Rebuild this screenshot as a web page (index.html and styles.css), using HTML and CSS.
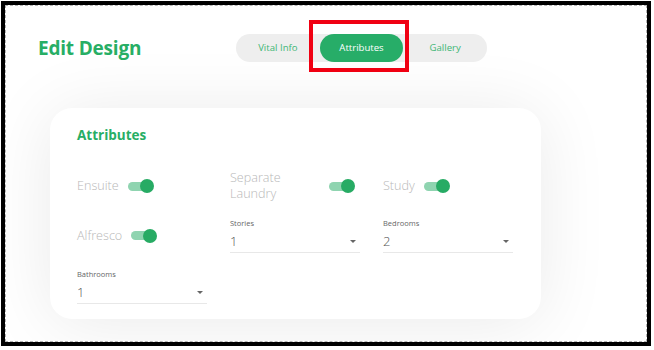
FILE: index.html
```html
<!DOCTYPE html>
<html>
<head>
<meta charset="utf-8">
<link rel="stylesheet" href="styles.css">
</head>
<body>
<div class="frame">
  <div class="screen">
    <div class="header">
      <h1 class="title">Edit Design</h1>
      <div class="tabs">
        <div class="tab">Vital Info</div>
        <div class="tab active">Attributes</div>
        <div class="tab">Gallery</div>
        <div class="highlight"></div>
      </div>
    </div>
    <div class="card">
      <h2 class="card-title">Attributes</h2>
      <div class="grid">
        <div class="switch-cell"><span class="switch-label">Ensuite</span><span class="switch"><span class="track"></span><span class="knob"></span></span></div>
        <div class="switch-cell"><span class="switch-label">Separate Laundry</span><span class="switch"><span class="track"></span><span class="knob"></span></span></div>
        <div class="switch-cell"><span class="switch-label">Study</span><span class="switch"><span class="track"></span><span class="knob"></span></span></div>

        <div class="switch-cell"><span class="switch-label">Alfresco</span><span class="switch"><span class="track"></span><span class="knob"></span></span></div>
        <div class="select">
          <div class="select-label">Stories</div>
          <div class="select-value"><span>1</span><span class="arrow"></span></div>
        </div>
        <div class="select">
          <div class="select-label">Bedrooms</div>
          <div class="select-value"><span>2</span><span class="arrow"></span></div>
        </div>

        <div class="select">
          <div class="select-label">Bathrooms</div>
          <div class="select-value"><span>1</span><span class="arrow"></span></div>
        </div>
      </div>
    </div>
  </div>
</div>
</body>
</html>
```

FILE: styles.css
```css
html, body {
  margin: 0;
  padding: 0;
  background: #fff;
}
body {
  font-family: "Open Sans", "Noto Sans", sans-serif;
}
.frame {
  margin: 1px 0 0 1px;
  width: 642px;
  height: 337px;
  border: 4px solid #000;
}
.screen {
  box-sizing: border-box;
  height: 100%;
  border: 1px dashed #b4b4b4;
  background: #fff;
  padding: 28px 0 0 32px;
  overflow: hidden;
}
.header {
  display: grid;
  grid-template-columns: 198px auto;
  align-items: center;
  height: 28px;
}
.title {
  margin: 0;
  font-size: 19px;
  line-height: 28px;
  font-weight: 700;
  color: #27ae65;
  letter-spacing: -0.2px;
}
.tabs {
  position: relative;
  display: flex;
  width: 251px;
  height: 28px;
  border-radius: 14px;
  background: #eeeeee;
}
.tab {
  flex: 1;
  text-align: center;
  font-size: 9.6px;
  line-height: 28px;
  color: #3fb676;
  border-radius: 14px;
}
.tab.active {
  background: #27ad68;
  color: #fff;
}
.highlight {
  position: absolute;
  left: 73px;
  top: -14px;
  width: 92px;
  height: 44px;
  border: 4px solid #f00012;
}
.card {
  margin: 46px 0 0 12px;
  width: 464px;
  padding: 18px 0 15px 27px;
  background: #fff;
  border-radius: 22px;
  box-shadow: 0 4px 70px rgba(0, 0, 0, 0.085);
}
.card-title {
  margin: 0 0 26px;
  font-size: 13.5px;
  line-height: 18px;
  font-weight: 700;
  color: #27ae65;
}
.grid {
  display: grid;
  grid-template-columns: repeat(3, 130px);
  column-gap: 23px;
  row-gap: 16px;
  align-items: center;
}
.switch-cell {
  display: flex;
  align-items: center;
  gap: 9px;
  max-width: 125px;
}
.switch-label {
  font-size: 12.6px;
  line-height: 16px;
  font-weight: 300;
  color: #b8b8b8;
}
.switch {
  position: relative;
  flex: 0 0 26px;
  height: 14px;
}
.track {
  position: absolute;
  left: 0;
  top: 2.5px;
  width: 22px;
  height: 9px;
  border-radius: 5px;
  background: #8fd4b0;
}
.knob {
  position: absolute;
  right: 0;
  top: 0;
  width: 14px;
  height: 14px;
  border-radius: 50%;
  background: #27ab64;
}
.select {
  display: flex;
  flex-direction: column;
}
.select-label {
  font-size: 7.5px;
  line-height: 10px;
  color: #666;
  margin-bottom: 2px;
}
.select-value {
  display: flex;
  justify-content: space-between;
  align-items: center;
  height: 22px;
  font-size: 13px;
  font-weight: 300;
  color: #555;
  border-bottom: 1px solid #e8e8e8;
  padding-right: 4px;
}
.arrow {
  width: 0;
  height: 0;
  border-left: 3.5px solid transparent;
  border-right: 3.5px solid transparent;
  border-top: 3.5px solid #666;
}
```
